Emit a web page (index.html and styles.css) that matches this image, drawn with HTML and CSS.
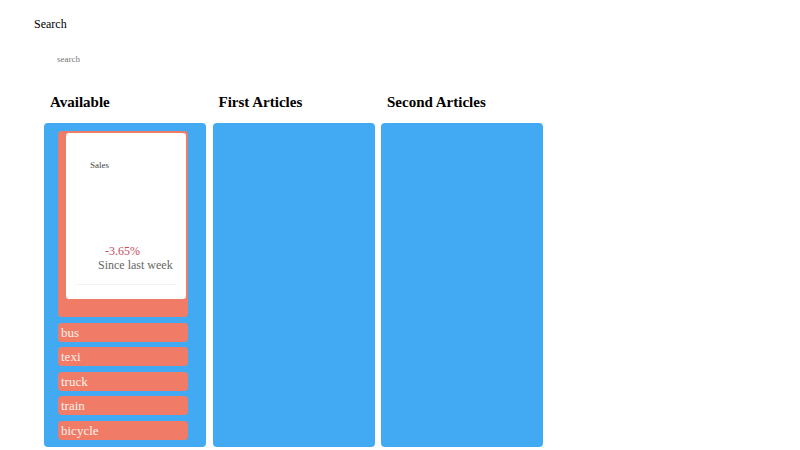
FILE: index.html
```html
<!DOCTYPE html>
<html>
<head>
<meta charset="utf-8">
<link rel="stylesheet" href="styles.css">
</head>
<body>
<div class="page">
  <div class="search-label">Search</div>
  <div class="search-row"><input class="search-input" type="text" placeholder="search"></div>
  <div class="board">
    <div class="column">
      <h3 class="column-title">Available</h3>
      <div class="column-body">
        <div class="item item-card">
          <div class="card">
            <div class="card-title">Sales</div>
            <div class="card-stat">
              <div class="stat-value">-3.65%</div>
              <div class="stat-label">Since last week</div>
            </div>
          </div>
        </div>
        <div class="item">bus</div>
        <div class="item">texi</div>
        <div class="item">truck</div>
        <div class="item">train</div>
        <div class="item">bicycle</div>
      </div>
    </div>
    <div class="column">
      <h3 class="column-title">First Articles</h3>
      <div class="column-body"></div>
    </div>
    <div class="column">
      <h3 class="column-title">Second Articles</h3>
      <div class="column-body"></div>
    </div>
  </div>
</div>
</body>
</html>
```

FILE: styles.css
```css
html, body {
  margin: 0;
  padding: 0;
  background: #ffffff;
}
body {
  font-family: "Liberation Serif", "Times New Roman", serif;
  color: #000;
}
.page {
  padding-top: 17px;
}
.search-label {
  margin-left: 34px;
  font-size: 12px;
  line-height: 14px;
}
.search-row {
  margin-top: 22px;
  margin-left: 55px;
}
.search-input {
  display: block;
  border: none;
  outline: none;
  padding: 0 2px;
  margin: 0;
  font-family: "Liberation Serif", serif;
  font-size: 9px;
  line-height: 12px;
  height: 12px;
  width: 120px;
  background: transparent;
}
.search-input::placeholder {
  color: #777;
}
.board {
  display: flex;
  gap: 6.5px;
  margin-left: 44px;
  margin-top: 27px;
}
.column {
  width: 162px;
  display: flex;
  flex-direction: column;
}
.column-title {
  margin: 0;
  padding-left: 6px;
  font-size: 15px;
  line-height: 20px;
  font-weight: bold;
  height: 31px;
}
.column-body {
  background: #42a9f3;
  border-radius: 4px;
  height: 324px;
  box-sizing: border-box;
  padding: 8px 18px 0 14px;
  display: flex;
  flex-direction: column;
  gap: 5.5px;
}
.item {
  background: #f07c67;
  border-radius: 4px;
  height: 19px;
  color: #fdf1ec;
  font-size: 13px;
  line-height: 20px;
  padding-left: 3px;
}
.item-card {
  height: 186px;
  padding: 2px 2px 18px 8px;
  box-sizing: border-box;
}
.card {
  background: #fff;
  border-radius: 3px;
  height: 166px;
  box-sizing: border-box;
  padding: 27px 10px 0 24px;
}
.card-title {
  font-size: 9px;
  line-height: 11px;
  color: #444;
}
.card-stat {
  margin-top: 74px;
  margin-left: -14px;
  width: 100px;
  padding-bottom: 12px;
  border-bottom: 1px solid #f2f2f2;
}
.stat-value {
  font-size: 12px;
  line-height: 13px;
  color: #c84a62;
  margin-left: 29px;
}
.stat-label {
  font-size: 12px;
  line-height: 14px;
  color: #666;
  margin-left: 22px;
  white-space: nowrap;
}
```
